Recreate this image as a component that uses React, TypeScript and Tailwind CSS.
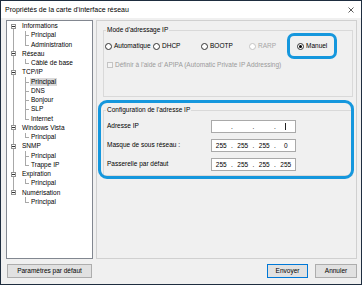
import React from 'react';

type TreeRow = { t: string; l: 0 | 1; last?: boolean; sel?: boolean };

const rows: TreeRow[] = [
  { t: 'Informations', l: 0 },
  { t: 'Principal', l: 1 },
  { t: 'Administration', l: 1, last: true },
  { t: 'Réseau', l: 0 },
  { t: 'Câblé de base', l: 1, last: true },
  { t: 'TCP/IP', l: 0 },
  { t: 'Principal', l: 1, sel: true },
  { t: 'DNS', l: 1 },
  { t: 'Bonjour', l: 1 },
  { t: 'SLP', l: 1 },
  { t: 'Internet', l: 1, last: true },
  { t: 'Windows Vista', l: 0 },
  { t: 'Principal', l: 1, last: true },
  { t: 'SNMP', l: 0 },
  { t: 'Principal', l: 1 },
  { t: 'Trappe IP', l: 1, last: true },
  { t: 'Expiration', l: 0 },
  { t: 'Principal', l: 1, last: true },
  { t: 'Numérisation', l: 0 },
  { t: 'Principal', l: 1, last: true },
];

const LAST_TOP = 18;

const Tree: React.FC = () => (
  <div className="w-[87px] h-full border border-[#828790] bg-white pt-[0.5px]">
    {rows.map((r, i) => (
      <div key={i} className="relative h-[9.25px] flex items-center">
        {/* root connector */}
        {i < LAST_TOP && i > 0 && r.l === 1 && (
          <span className="absolute left-[6px] top-0 bottom-0 w-px bg-[#a8a8a8]" />
        )}
        {r.l === 0 && i > 0 && <span className="absolute left-[6px] top-0 h-1/2 w-px bg-[#a8a8a8]" />}
        {r.l === 0 && i < LAST_TOP && <span className="absolute left-[6px] top-1/2 bottom-0 w-px bg-[#a8a8a8]" />}
        {r.l === 0 && (
          <span className="absolute left-[4px] top-[2px] w-[5px] h-[5px] border border-[#919191] bg-white flex items-center justify-center">
            <span className="w-[3px] h-px bg-[#333]" />
          </span>
        )}
        {r.l === 1 && (
          <>
            <span className={`absolute left-[18px] top-0 w-px bg-[#a8a8a8] ${r.last ? 'h-1/2' : 'bottom-0'}`} />
            <span className="absolute left-[18px] top-1/2 w-[4px] h-px bg-[#a8a8a8]" />
          </>
        )}
        <span
          className={`${r.l === 0 ? 'ml-[14px]' : 'ml-[23px]'} px-[1px] leading-[8px] whitespace-nowrap ${
            r.sel ? 'bg-[#d9d9d9]' : ''
          }`}
        >
          {r.t}
        </span>
      </div>
    ))}
  </div>
);

const Radio: React.FC<{ label: string; checked?: boolean; disabled?: boolean; className?: string }> = ({
  label,
  checked,
  disabled,
  className = '',
}) => (
  <div className={`flex items-center gap-[2px] ${className}`}>
    <span
      className={`w-[7px] h-[7px] rounded-full border bg-white flex items-center justify-center ${
        disabled ? 'border-[#c4c4c4]' : 'border-[#333]'
      }`}
    >
      {checked && <span className="w-[3px] h-[3px] rounded-full bg-black" />}
    </span>
    <span className={`leading-[8px] whitespace-nowrap ${disabled ? 'text-[#a6a6a6]' : 'text-black'}`}>{label}</span>
  </div>
);

const IpBox: React.FC<{ parts?: string[]; caret?: boolean }> = ({ parts = ['', '', '', ''], caret }) => (
  <div className="w-[85px] h-[13px] border border-[#a9a9a9] bg-white flex items-center">
    {parts.map((p, i) => (
      <React.Fragment key={i}>
        {i > 0 && <span className="w-[3px] text-center leading-[8px]">.</span>}
        <span className="flex-1 text-center leading-[8px] flex justify-center">
          {p}
          {caret && i === 3 && <span className="w-px h-[7px] bg-[#222]" />}
        </span>
      </React.Fragment>
    ))}
  </div>
);

const Button: React.FC<{ label: string; className?: string; primary?: boolean }> = ({ label, className = '', primary }) => (
  <div
    className={`h-[14px] flex items-center justify-center bg-[#e1e1e1] border ${
      primary ? 'border-[#0078d7]' : 'border-[#adadad]'
    } ${className}`}
  >
    <span className="leading-[8px]">{label}</span>
  </div>
);

export default function App() {
  return (
    <div className="w-[362px] h-[285px] border border-[#1e2d3f] bg-[#f0f0f0] flex flex-col font-['Liberation_Sans',Arial,sans-serif] text-[6.5px] text-black overflow-hidden">
      {/* title bar */}
      <div className="h-[17px] bg-white flex items-center justify-between pl-[4px] pr-[7px] shrink-0">
        <span className="text-[7px] leading-[9px] whitespace-nowrap">Propriétés de la carte d'interface réseau</span>
        <svg width="6" height="6" viewBox="0 0 6 6">
          <path d="M0.5 0.5 L5.5 5.5 M5.5 0.5 L0.5 5.5" stroke="#333" strokeWidth="0.8" />
        </svg>
      </div>

      <div className="flex-1 flex flex-col pt-[2px] pl-[5px] pr-[4px] pb-[6px]">
        <div className="h-[239px] flex gap-[3px]">
          <Tree />

          {/* right panel */}
          <div className="flex-1 border border-[#d0d0d0] pt-[5px] pl-[6px] pr-[3px]">
            <fieldset className="h-[71px] border border-[#d9d9d9]">
              <legend className="ml-[2px] px-[1px] leading-[8px]">Mode d'adressage IP</legend>
              <div className="mt-[8px] pl-[1px] flex items-center h-[8px]">
                <Radio label="Automatique" className="w-[48px]" />
                <Radio label="DHCP" className="w-[48px]" />
                <Radio label="BOOTP" className="w-[48px]" />
                <Radio label="RARP" disabled className="w-[48px]" />
                <div className="relative">
                  <Radio label="Manuel" checked />
                  <span className="absolute -left-[10px] -right-[10px] -top-[9px] -bottom-[9px] border-[3px] border-[#1597dd] rounded-[7px]" />
                </div>
              </div>
              <div className="mt-[11px] pl-[3px] flex items-center gap-[2px] h-[8px]">
                <span className="w-[6px] h-[6px] border border-[#c4c4c4] bg-[#f4f4f4]" />
                <span className="leading-[8px] text-[#9a9a9a] whitespace-nowrap">
                  Définir à l'aide d' APIPA (Automatic Private IP Addressing)
                </span>
              </div>
            </fieldset>

            <div className="relative mt-[9px]">
              <fieldset className="h-[70px] border border-[#d9d9d9]">
                <legend className="ml-[2px] px-[1px] leading-[8px]">Configuration de l'adresse IP</legend>
                <div className="mt-[6px] pl-[3px] flex flex-col gap-[6px]">
                  <div className="flex items-start">
                    <span className="w-[104px] pt-[2px] leading-[8px]">Adresse IP</span>
                    <IpBox caret />
                  </div>
                  <div className="flex items-start">
                    <span className="w-[104px] pt-[2px] leading-[8px]">Masque de sous réseau :</span>
                    <IpBox parts={['255', '255', '255', '0']} />
                  </div>
                  <div className="flex items-start">
                    <span className="w-[104px] pt-[2px] leading-[8px]">Passerelle par défaut</span>
                    <IpBox parts={['255', '255', '255', '255']} />
                  </div>
                </div>
              </fieldset>
              <span className="absolute -left-[5px] -right-[1px] -top-[6px] -bottom-[3px] border-[3px] border-[#1597dd] rounded-[9px]" />
            </div>
          </div>
        </div>

        <div className="mt-[5px] flex justify-between">
          <Button label="Paramètres par défaut" className="ml-[1px] w-[85px]" />
          <div className="flex gap-[7px]">
            <Button label="Envoyer" primary className="w-[41px]" />
            <Button label="Annuler" className="w-[42px]" />
          </div>
        </div>
      </div>
    </div>
  );
}
